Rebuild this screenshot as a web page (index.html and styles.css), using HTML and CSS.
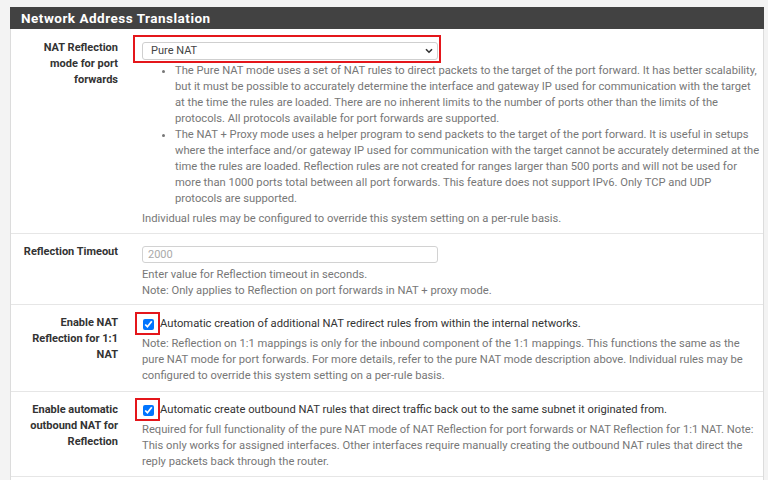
FILE: index.html
```html
<!DOCTYPE html>
<html lang="en">
<head>
<meta charset="utf-8">
<title>Network Address Translation</title>
<link rel="stylesheet" href="styles.css">
</head>
<body>
<div class="page">
  <div class="panel">
    <div class="panel-heading">Network Address Translation</div>

    <div class="form-row row-mode">
      <div class="label">NAT Reflection mode for port forwards</div>
      <div class="field">
        <div class="mark mark-select">
          <div class="select">
            <span>Pure NAT</span>
            <svg class="chevron" width="8" height="6" viewBox="0 0 8 6"><path d="M1 1.2 L4 4.2 L7 1.2" fill="none" stroke="#333" stroke-width="1.6"/></svg>
          </div>
        </div>
        <ul class="help-list">
          <li>The Pure NAT mode uses a set of NAT rules to direct packets to the target of the port forward. It has better scalability, but it must be possible to accurately determine the interface and gateway IP used for communication with the target at the time the rules are loaded. There are no inherent limits to the number of ports other than the limits of the protocols. All protocols available for port forwards are supported.</li>
          <li>The NAT + Proxy mode uses a helper program to send packets to the target of the port forward. It is useful in setups where the interface and/or gateway IP used for communication with the target cannot be accurately determined at the time the rules are loaded. Reflection rules are not created for ranges larger than 500 ports and will not be used for more than 1000 ports total between all port forwards. This feature does not support IPv6. Only TCP and UDP<br>protocols are supported.</li>
        </ul>
        <p class="help help-note">Individual rules may be configured to override this system setting on a per-rule basis.</p>
      </div>
    </div>

    <div class="form-row row-timeout">
      <div class="label">Reflection Timeout</div>
      <div class="field">
        <div class="input">2000</div>
        <p class="help help-input">Enter value for Reflection timeout in seconds.<br>Note: Only applies to Reflection on port forwards in NAT + proxy mode.</p>
      </div>
    </div>

    <div class="form-row row-nat11">
      <div class="label">Enable NAT Reflection for 1:1 NAT</div>
      <div class="field">
        <div class="check-line">
          <span class="mark mark-check"><input type="checkbox" checked></span>
          <span class="check-text">Automatic creation of additional NAT redirect rules from within the internal networks.</span>
        </div>
        <p class="help">Note: Reflection on 1:1 mappings is only for the inbound component of the 1:1 mappings. This functions the same as the pure NAT mode for port forwards. For more details, refer to the pure NAT mode description above. Individual rules may be configured to override this system setting on a per-rule basis.</p>
      </div>
    </div>

    <div class="form-row row-outbound">
      <div class="label">Enable automatic outbound NAT for Reflection</div>
      <div class="field">
        <div class="check-line">
          <span class="mark mark-check"><input type="checkbox" checked></span>
          <span class="check-text">Automatic create outbound NAT rules that direct traffic back out to the same subnet it originated from.</span>
        </div>
        <p class="help">Required for full functionality of the pure NAT mode of NAT Reflection for port forwards or NAT Reflection for 1:1 NAT. Note: This only works for assigned interfaces. Other interfaces require manually creating the outbound NAT rules that direct the reply packets back through the router.</p>
      </div>
    </div>
  </div>
</div>
</body>
</html>
```
FILE: styles.css
```css
* { box-sizing: border-box; }

html, body {
  margin: 0;
  padding: 0;
  background: #f3f3f3;
  font-family: Roboto, "Liberation Sans", Arial, sans-serif;
  font-size: 11px;
  line-height: 16px;
  color: #333;
}

.page {
  padding: 7px 4px 0 10px;
}

.panel {
  background: #fff;
  border-left: 1px solid #dcdcdc;
  border-right: 1px solid #dcdcdc;
  height: 473px;
}

.panel-heading {
  background: #424242;
  color: #fff;
  font-weight: 700;
  font-size: 13.5px;
  letter-spacing: 0.5px;
  height: 22px;
  line-height: 22px;
  padding-left: 11px;
  margin-left: -1px;
  margin-right: -1px;
}

.form-row {
  display: flex;
  border-bottom: 1px solid #e6e6e6;
}

.label {
  flex: 0 0 122px;
  padding: 10px 15px 0 9px;
  text-align: right;
  font-weight: 700;
  font-size: 11px;
  color: #333;
}

.field {
  flex: 1;
  padding: 0 1px 0 9px;
  color: #777;
  font-size: 11.2px;
}

.row-mode .label { padding-top: 11px; }
.row-mode .field { padding-top: 6px; padding-bottom: 6px; }
.row-timeout .field { padding-top: 12px; padding-bottom: 5px; }
.row-nat11 .field { padding-top: 7px; padding-bottom: 7px; }
.row-outbound .field { padding-top: 6px; padding-bottom: 6px; }

.mark {
  border: 2px solid #e4161b;
}

.mark-select {
  width: 308px;
  margin-left: -9px;
  padding: 5px 1px 1px 7px;
}

.select {
  height: 18px;
  border: 1px solid #cfcfcf;
  border-radius: 3px;
  background: #fff;
  display: flex;
  align-items: center;
  justify-content: space-between;
  padding: 0 4px 0 8px;
  color: #444;
  font-size: 11px;
}

.chevron { display: block; }

.help-list {
  margin: 0;
  padding-left: 33px;
}

.help {
  margin: 0;
}

.help-note { margin-top: 4px; }

.input {
  width: 296px;
  height: 17px;
  border: 1px solid #d2d2d2;
  border-radius: 3px;
  color: #aaa;
  padding-left: 5px;
  line-height: 15px;
  font-size: 11px;
}

.help-input { margin-top: 4px; }

.check-line {
  display: flex;
  align-items: center;
  margin-left: -7px;
  height: 24px;
  padding-bottom: 1px;
}

.mark-check {
  display: flex;
  padding: 5px 4px 3px 6px;
}

.mark-check input {
  margin: 0;
  width: 11px;
  height: 11px;
}

.check-text {
  color: #333;
}
```
